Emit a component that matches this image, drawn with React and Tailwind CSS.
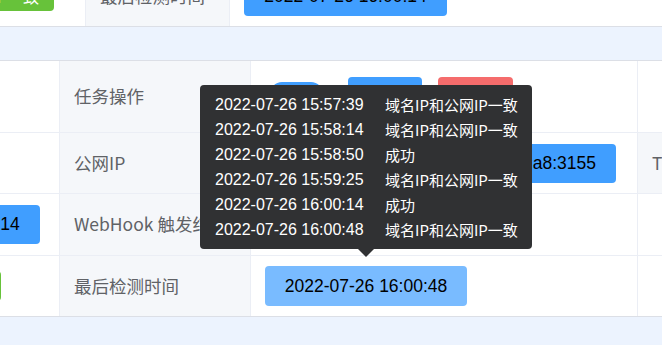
import React from 'react';

const logs = [
  ['2022-07-26 15:57:39', '域名IP和公网IP一致'],
  ['2022-07-26 15:58:14', '域名IP和公网IP一致'],
  ['2022-07-26 15:58:50', '成功'],
  ['2022-07-26 15:59:25', '域名IP和公网IP一致'],
  ['2022-07-26 16:00:14', '成功'],
  ['2022-07-26 16:00:48', '域名IP和公网IP一致'],
];

const cjk = "font-['Noto_Sans_CJK_SC',sans-serif]";
const btnFont = "font-['Liberation_Sans','Noto_Sans_CJK_SC',sans-serif]";

const Label = ({ children, className = '' }) => (
  <div className={`flex items-center pl-[14px] bg-[#f5f7fa] border-r border-[#ebeef5] text-[17.5px] text-[#606266] whitespace-nowrap overflow-hidden ${cjk} ${className}`}>
    {children}
  </div>
);

const App = () => {
  return (
    <div className="relative w-[662px] h-[345px] overflow-hidden bg-white">
      {/* previous record (scrolled past) */}
      <div className="flex h-[61px] -mt-[34px] border-b border-[#dcdfe6]">
        <div className="w-[86px] shrink-0 flex items-center justify-end pr-[31px] overflow-hidden border-r border-[#ebeef5]">
          <span className={`h-[30px] shrink-0 flex items-center px-[15px] rounded-[4px] bg-[#67c23a] text-white text-[16px] whitespace-nowrap ${cjk}`}>域名IP和公网IP一致</span>
        </div>
        <Label className="w-[144px] shrink-0">最后检测时间</Label>
        <div className="flex-1 flex items-center pl-[14px]">
          <span className={`w-[203px] h-[40px] flex items-center justify-center rounded-[4px] bg-[#409eff] text-black text-[17.5px] ${btnFont}`}>2022-07-26 16:00:14</span>
        </div>
      </div>
      <div className="h-[34px] bg-[#ecf3fe] border-b border-[#dcdfe6]" />

      {/* current record */}
      <div className="flex h-[72px] border-b border-[#ebeef5]">
        <div className="w-[60px] shrink-0 border-r border-[#ebeef5]" />
        <Label className="w-[191px] shrink-0">任务操作</Label>
        <div className="w-[387px] shrink-0 flex items-center pl-[19px] border-r border-[#ebeef5]">
          <span className="w-[53px] h-[30px] rounded-[12px] bg-[#409eff]" />
          <span className="ml-[25px] w-[74px] h-[40px] rounded-[4px] bg-[#409eff]" />
          <span className="ml-[16px] w-[75px] h-[40px] rounded-[4px] bg-[#f56c6c]" />
        </div>
        <div className="flex-1" />
      </div>

      <div className="flex h-[61px] border-b border-[#ebeef5]">
        <div className="w-[60px] shrink-0 border-r border-[#ebeef5]" />
        <Label className="w-[191px] shrink-0">公网IP</Label>
        <div className="w-[387px] shrink-0 flex items-center pl-[14px] border-r border-[#ebeef5]">
          <span className={`w-[351px] h-[39px] flex items-center justify-end pr-[20px] rounded-[4px] bg-[#409eff] text-black text-[17.5px] whitespace-nowrap ${btnFont}`}>240e:3b4:38e1:5d20::a8:3155</span>
        </div>
        <Label className="flex-1 border-r-0">TTL</Label>
      </div>

      <div className="flex h-[62px] border-b border-[#ebeef5]">
        <div className="w-[60px] shrink-0 flex items-center justify-end pr-[19px] overflow-hidden border-r border-[#ebeef5]">
          <span className={`w-[203px] h-[39px] shrink-0 flex items-center justify-center rounded-[4px] bg-[#409eff] text-black text-[17.5px] ${btnFont}`}>2022-07-26 16:00:14</span>
        </div>
        <Label className="w-[191px] shrink-0">WebHook 触发结果</Label>
        <div className="w-[387px] shrink-0 border-r border-[#ebeef5]" />
        <div className="flex-1" />
      </div>

      <div className="flex h-[61px] border-b border-[#dcdfe6]">
        <div className="w-[60px] shrink-0 flex items-center justify-end pr-[58px] overflow-hidden border-r border-[#ebeef5]">
          <span className={`h-[30px] shrink-0 flex items-center px-[15px] rounded-[4px] bg-[#67c23a] text-white text-[16px] whitespace-nowrap ${cjk}`}>成功</span>
        </div>
        <Label className="w-[191px] shrink-0">最后检测时间</Label>
        <div className="w-[387px] shrink-0 flex items-center pl-[14px] border-r border-[#ebeef5]">
          <span className={`w-[202px] h-[40px] flex items-center justify-center rounded-[4px] bg-[#79bbff] text-black text-[17.5px] ${btnFont}`}>2022-07-26 16:00:48</span>
        </div>
        <div className="flex-1" />
      </div>
      <div className="flex-1 h-[40px] bg-[#ecf3fe]" />

      {/* tooltip */}
      <div className={`absolute left-[200px] top-[85px] w-[332px] h-[164px] rounded-[4px] bg-[#303133] px-[15px] pt-[7px] text-white text-[16px] leading-[25px] ${btnFont}`}>
        {logs.map(([t, msg]) => (
          <div key={t} className="flex items-center whitespace-nowrap">
            <span className="w-[170px] shrink-0">{t}</span>
            <span className={`text-[15px] ${cjk}`}>{msg}</span>
          </div>
        ))}
        <span className="absolute left-[158px] -bottom-[8px] w-0 h-0 border-x-[8px] border-x-transparent border-t-[8px] border-t-[#303133]" />
      </div>
    </div>
  );
};

export default App;
